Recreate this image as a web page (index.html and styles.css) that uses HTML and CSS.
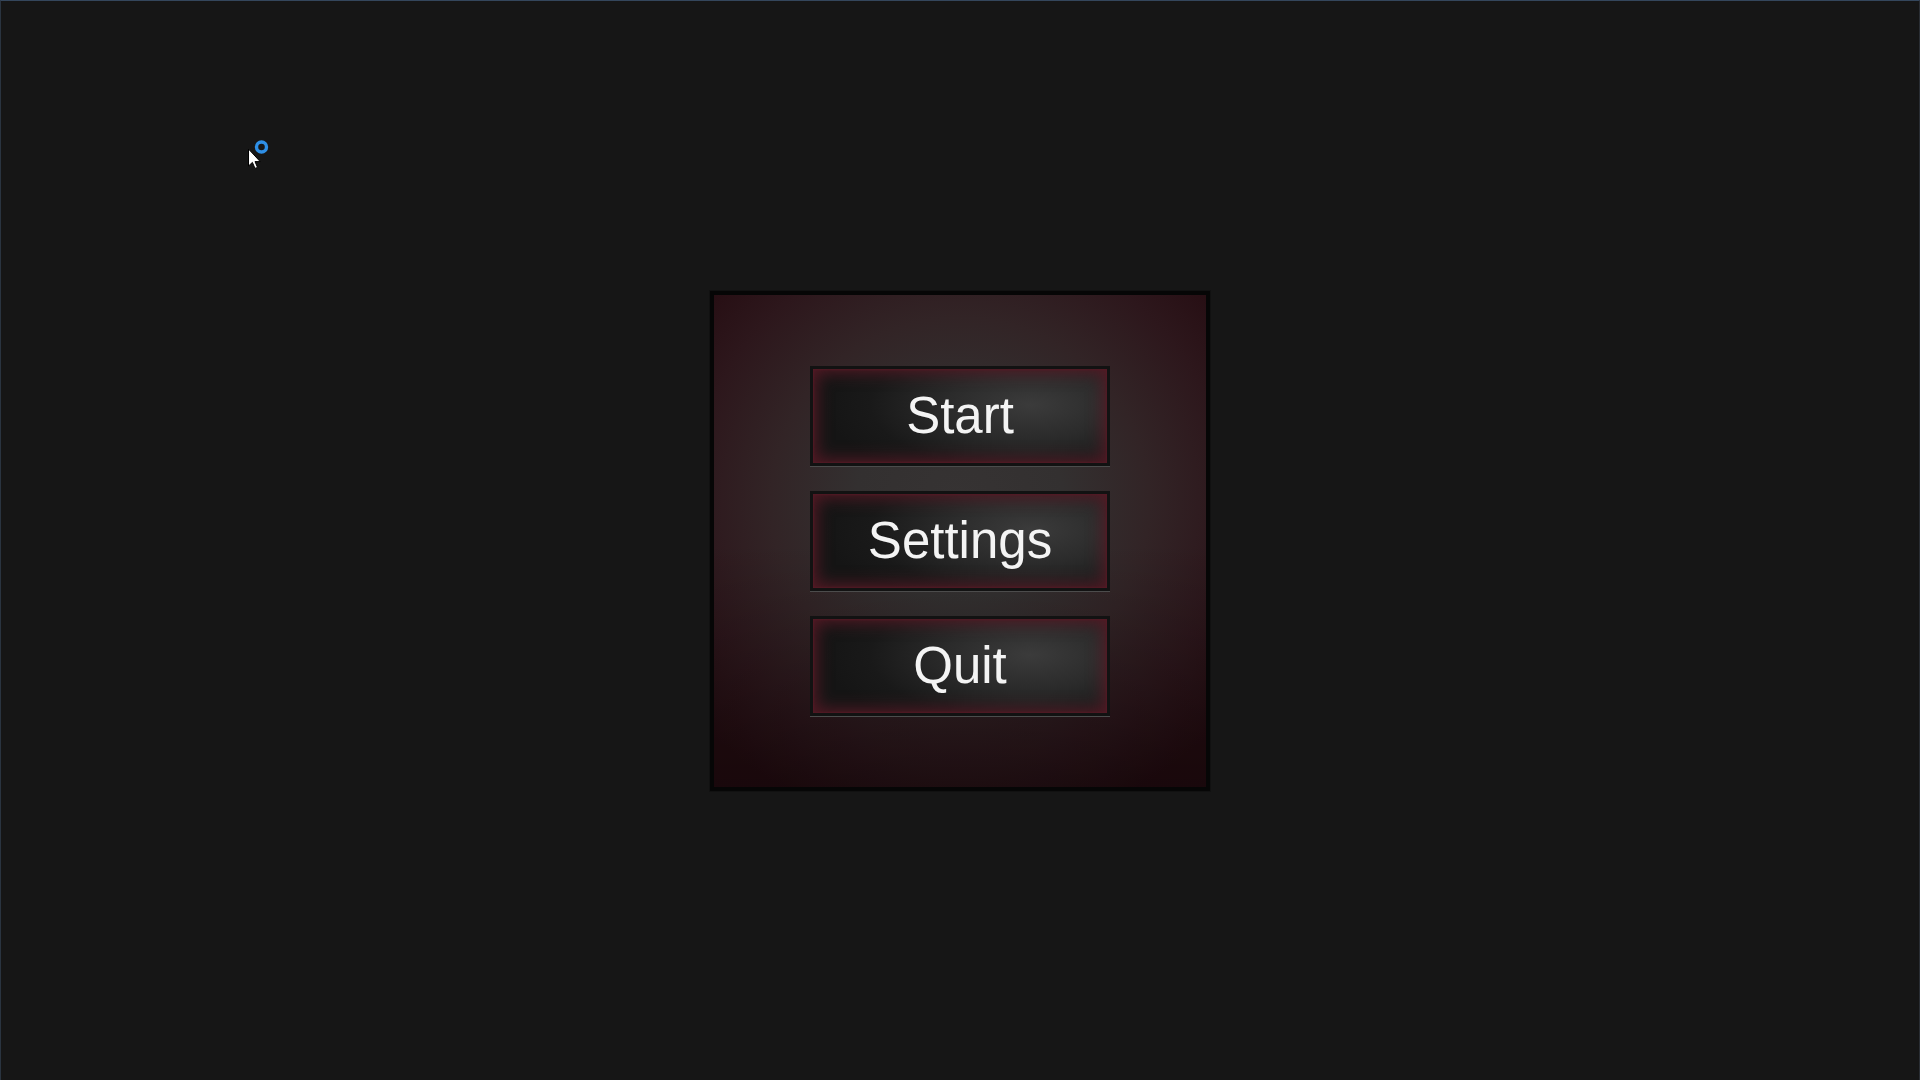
FILE: index.html
```html
<!DOCTYPE html>
<html lang="en">
<head>
<meta charset="utf-8">
<title>Menu</title>
<link rel="stylesheet" href="styles.css">
</head>
<body>
<div class="screen">
  <div class="panel">
    <button class="menu-btn">Start</button>
    <button class="menu-btn">Settings</button>
    <button class="menu-btn">Quit</button>
  </div>
  <svg class="cursor" width="24" height="32" viewBox="0 0 24 32">
    <path d="M1.5 10 L1.5 27 L5.4 23.4 L8 29.4 L10.5 28.4 L8 22.6 L13.2 22.6 Z" fill="#ffffff" stroke="#000000" stroke-width="1"/>
    <circle cx="14.5" cy="8" r="5" fill="none" stroke="#2e8fe6" stroke-width="3.4"/>
  </svg>
</div>
</body>
</html>
```
FILE: styles.css
```css
html, body {
  margin: 0;
  padding: 0;
  width: 100%;
  height: 100%;
  background: #161616;
  overflow: hidden;
}

.screen {
  position: relative;
  box-sizing: border-box;
  width: 1920px;
  height: 1080px;
  display: flex;
  align-items: center;
  justify-content: center;
  border-top: 1px solid #34465c;
  border-left: 1px solid #2a3440;
  border-right: 1px solid #2a2e34;
  background: #161616;
  font-family: "Liberation Sans", Arial, sans-serif;
}

.panel {
  box-sizing: border-box;
  width: 500px;
  height: 500px;
  border: 4px solid #060606;
  display: flex;
  flex-direction: column;
  align-items: center;
  justify-content: center;
  gap: 25px;
  background:
    linear-gradient(to bottom, rgba(0,0,0,0) 50%, rgba(0,0,0,0.32) 100%),
    radial-gradient(ellipse 70% 68% at 50% 42%, #363333 0%, #333030 30%, #322426 55%, #2d171c 78%, #250c11 100%);
  box-shadow: 0 0 0 1px #111;
}

.menu-btn {
  box-sizing: border-box;
  width: 300px;
  height: 100px;
  border: 3px solid #121212;
  margin: 0;
  padding: 0;
  color: #f4f4f4;
  font-family: "Liberation Sans", Arial, sans-serif;
  font-size: 51px;
  line-height: 1;
  background: radial-gradient(ellipse 70% 90% at 74% 38%, #3b3b3b 0%, #2b2b2b 40%, #191919 78%, #151515 100%);
  box-shadow:
    inset 0 0 16px 4px rgba(88, 26, 38, 0.9),
    inset 0 0 2px 1px rgba(80, 26, 36, 0.9),
    0 1px 0 0 #4c4c4c;
  cursor: default;
}

.cursor {
  position: absolute;
  left: 246px;
  top: 138px;
}
```
